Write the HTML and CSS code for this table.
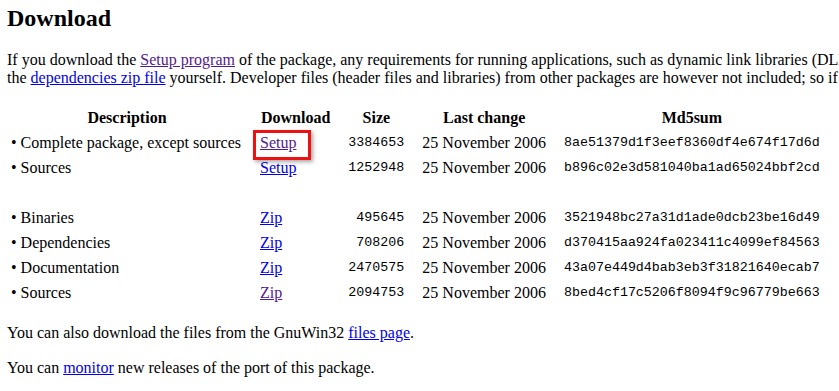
FILE: index.html
```html
<!DOCTYPE html>
<html>
<head>
<meta charset="utf-8">
<title>Download</title>
<link rel="stylesheet" href="styles.css">
</head>
<body>
<h2 class="title">Download</h2>
<p class="intro">If you download the <a class="visited" href="#setup">Setup program</a> of the package, any requirements for running applications, such as dynamic link libraries (DLL's) from the dependencies as listed below under Requirements, are already included. If you download the package as Zip files, then you must download and install<br>the <a href="#dep">dependencies zip file</a> yourself. Developer files (header files and libraries) from other packages are however not included; so if you wish to develop your own applications, you must separately install the required packages.</p>
<table class="files">
  <tr>
    <th class="c-desc">Description</th>
    <th class="c-dl">Download</th>
    <th class="c-size">Size</th>
    <th class="c-date">Last change</th>
    <th class="c-md5">Md5sum</th>
  </tr>
  <tr>
    <td class="desc">• Complete package, except sources</td>
    <td class="dl"><span class="mark"><a class="visited" href="#s1">Setup</a><span class="hilite"></span></span></td>
    <td class="size">3384653</td>
    <td class="date">25 November 2006</td>
    <td class="md5">8ae51379d1f3eef8360df4e674f17d6d</td>
  </tr>
  <tr>
    <td class="desc">• Sources</td>
    <td class="dl"><a href="#s2">Setup</a></td>
    <td class="size">1252948</td>
    <td class="date">25 November 2006</td>
    <td class="md5">b896c02e3d581040ba1ad65024bbf2cd</td>
  </tr>
  <tr class="spacer"><td colspan="5"></td></tr>
  <tr>
    <td class="desc">• Binaries</td>
    <td class="dl"><a href="#z1">Zip</a></td>
    <td class="size">495645</td>
    <td class="date">25 November 2006</td>
    <td class="md5">3521948bc27a31d1ade0dcb23be16d49</td>
  </tr>
  <tr>
    <td class="desc">• Dependencies</td>
    <td class="dl"><a href="#z2">Zip</a></td>
    <td class="size">708206</td>
    <td class="date">25 November 2006</td>
    <td class="md5">d370415aa924fa023411c4099ef84563</td>
  </tr>
  <tr>
    <td class="desc">• Documentation</td>
    <td class="dl"><a href="#z3">Zip</a></td>
    <td class="size">2470575</td>
    <td class="date">25 November 2006</td>
    <td class="md5">43a07e449d4bab3eb3f31821640ecab7</td>
  </tr>
  <tr>
    <td class="desc">• Sources</td>
    <td class="dl"><a class="visited" href="#z4">Zip</a></td>
    <td class="size">2094753</td>
    <td class="date">25 November 2006</td>
    <td class="md5">8bed4cf17c5206f8094f9c96779be663</td>
  </tr>
</table>
<p class="note first">You can also download the files from the GnuWin32 <a href="#files">files page</a>.</p>
<p class="note">You can <a href="#monitor">monitor</a> new releases of the port of this package.</p>
</body>
</html>
```
FILE: styles.css
```css
html {
  overflow: hidden;
  background: #fff;
}
body {
  margin: 0;
  padding: 0 0 0 7px;
  font-family: "Liberation Serif", "Times New Roman", serif;
  font-size: 16px;
  line-height: 18px;
  color: #000;
}
a {
  color: #0000ee;
  text-decoration: underline;
}
a.visited {
  color: #551a8b;
}
.title {
  margin: 4px 0 0;
  font-size: 24px;
  line-height: 28px;
  font-weight: bold;
}
.intro {
  margin: 19px 0 0;
  white-space: nowrap;
}
.files {
  margin-top: 18px;
  border-collapse: separate;
  border-spacing: 0;
  line-height: 19px;
}
.files th,
.files td {
  padding: 3px 9px;
  height: 19px;
  white-space: nowrap;
}
.files th {
  font-weight: bold;
  text-align: center;
}
.files .c-desc,
.files .desc {
  padding-left: 4px;
  width: 232px;
}
.files .desc {
  text-align: left;
}
.files .dl {
  text-align: left;
  padding-left: 8px;
}
.files .size {
  text-align: right;
  font-family: "Liberation Mono", "Courier New", monospace;
  font-size: 13.333px;
}
.files .md5 {
  text-align: left;
  font-family: "Liberation Mono", "Courier New", monospace;
  font-size: 13.333px;
}
.files .date {
  text-align: left;
}
.spacer td {
  height: 19px;
}
.mark {
  position: relative;
  display: inline-block;
}
.hilite {
  position: absolute;
  left: -7px;
  top: -3px;
  width: 58px;
  height: 30px;
  box-sizing: border-box;
  border: 3px solid #ee1111;
  box-shadow: 2px 2px 4px rgba(0, 0, 0, 0.35);
  pointer-events: none;
}
.note {
  margin: 17px 0 0;
}
.note.first {
  margin-top: 19px;
}
```
